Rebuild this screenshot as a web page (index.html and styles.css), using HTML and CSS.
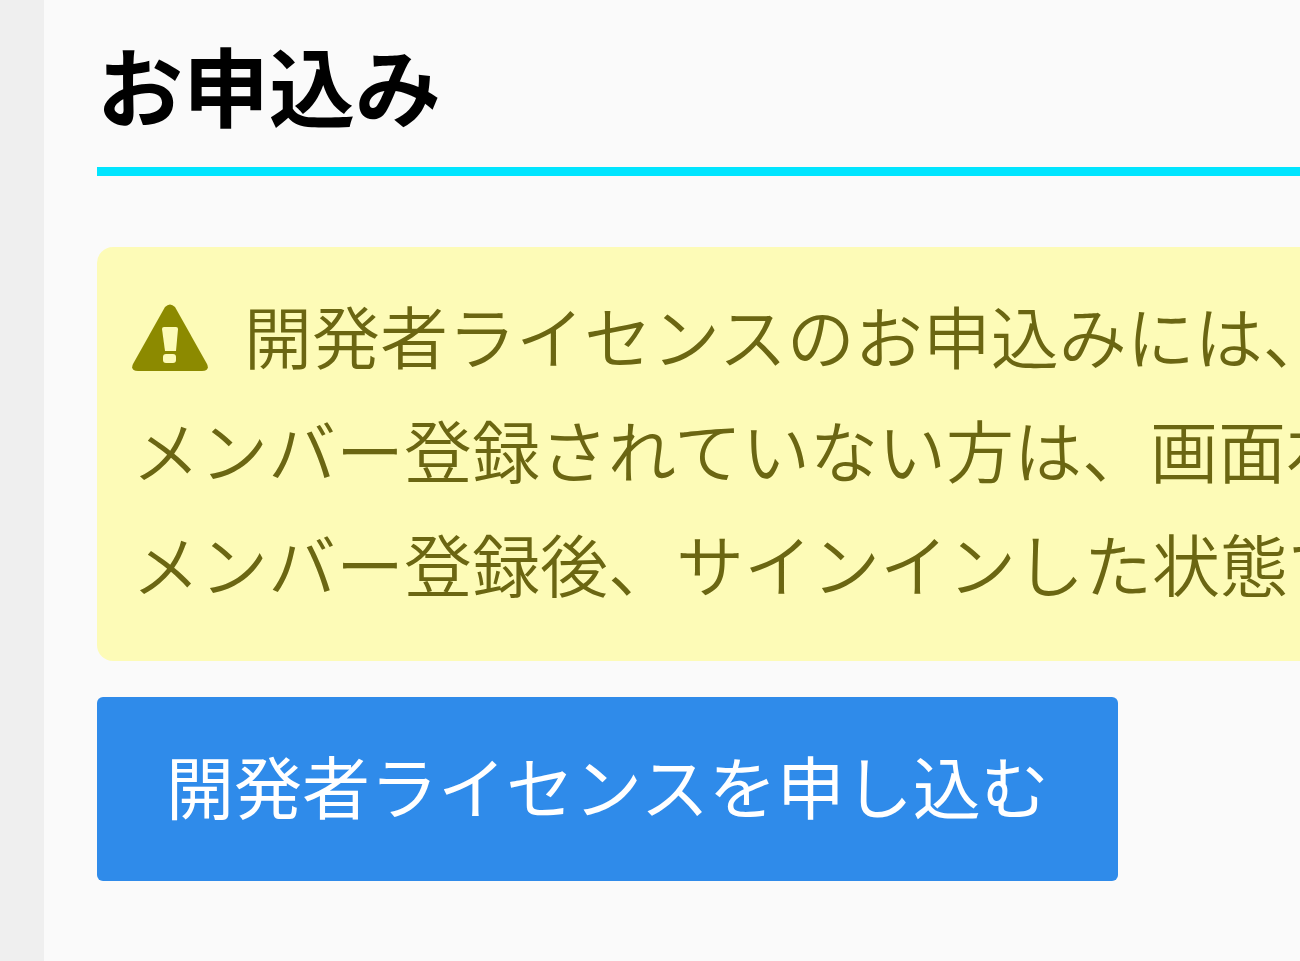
FILE: index.html
```html
<!DOCTYPE html>
<html lang="ja">
<head>
<meta charset="utf-8">
<title>お申込み</title>
<link rel="stylesheet" href="styles.css">
</head>
<body>
<main class="content">
  <h1 class="heading">お申込み</h1>
  <div class="notice">
    <p class="line"><svg class="icon" viewBox="0 0 76 68" aria-hidden="true"><path class="sign" d="M33 3Q38-2 43 3L75 60Q78 67 70 67H6Q-2 67 1 60Z"/><path class="mark" d="M30 25Q30 23 32 23H44Q46 23 46 25L44 47H33Z"/><rect class="mark" x="31" y="50" width="13" height="9" rx="3"/></svg>開発者ライセンスのお申込みには、</p>
    <p class="line">メンバー登録されていない方は、画面右</p>
    <p class="line">メンバー登録後、サインインした状態で</p>
  </div>
  <button class="apply" type="button">開発者ライセンスを申し込む</button>
</main>
</body>
</html>
```
FILE: styles.css
```css
* {
  box-sizing: border-box;
}

body {
  margin: 0;
  overflow-x: hidden;
  background: #fafafa;
  font-family: "Noto Sans CJK JP", sans-serif;
}

.content {
  min-height: 100vh;
  padding: 14px 0 80px 53px;
  border-left: 44px solid #efefef;
  overflow: hidden;
}

.heading {
  margin: 0 0 71px;
  padding-bottom: 13px;
  border-bottom: 9px solid #00e5ff;
  color: #000;
  font-size: 86px;
  font-weight: 700;
  line-height: 140px;
}

.notice {
  margin-bottom: 36px;
  padding: 31px 0 41px 35px;
  border-radius: 16px 0 0 16px;
  background: #fdfbb7;
  color: #6b6612;
  font-size: 68px;
  font-weight: 350;
  line-height: 114px;
}

.line {
  margin: 0;
  white-space: nowrap;
}

.icon {
  width: 76px;
  height: 68px;
  margin-right: 36px;
  vertical-align: -8px;
}

.sign {
  fill: #8c8a00;
}

.mark {
  fill: #fdfbb7;
}

.apply {
  display: block;
  padding: 31px 69px 39px;
  border: 0;
  border-radius: 6px;
  background: #2f8bea;
  color: #fff;
  font-family: inherit;
  font-size: 68px;
  font-weight: 400;
  line-height: 114px;
  white-space: nowrap;
}
```
